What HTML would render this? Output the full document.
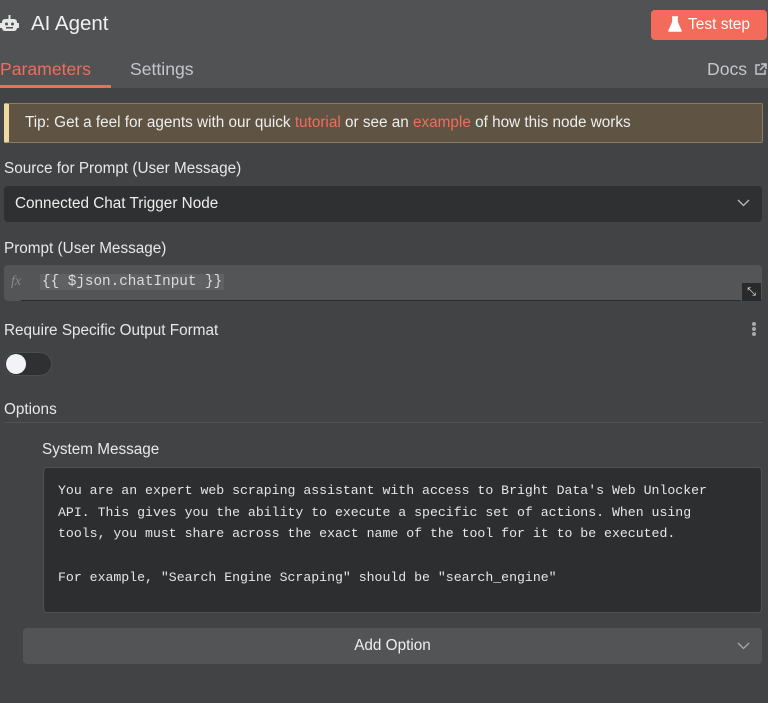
<!DOCTYPE html>
<html><head><meta charset="utf-8"><style>
*{box-sizing:border-box;margin:0;padding:0}
body{width:768px;height:703px;overflow:hidden;background:#424345;font-family:"Liberation Sans",sans-serif;color:#e8e8e8;position:relative}
.hdr{position:absolute;left:0;top:0;width:768px;height:88px;background:#515254}
.abs{position:absolute}
.t{font-size:15.3px}
</style></head><body>
<div class="hdr"></div>
<svg class="abs" style="left:0;top:13px" width="22" height="22" viewBox="0 0 22 22"><rect x="2" y="6" width="15" height="12" rx="3" fill="#e8e8e8"/><rect x="0" y="10" width="2" height="5" fill="#e8e8e8"/><rect x="17" y="10" width="2" height="5" fill="#e8e8e8"/><rect x="8.5" y="2" width="2" height="4" fill="#e8e8e8"/><circle cx="6.5" cy="11" r="1.5" fill="#515254"/><circle cx="12.5" cy="11" r="1.5" fill="#515254"/><rect x="6" y="14" width="7" height="1.5" fill="#515254"/></svg>
<div class="abs" style="left:31px;top:12px;font-size:20.5px;color:#f0f0f0">AI Agent</div>
<div class="abs" style="left:651px;top:10px;width:116px;height:30px;background:#f26b5b;border-radius:4px;color:#fff;font-size:15.5px;line-height:30px;padding-left:37px">Test step</div>
<svg class="abs" style="left:668px;top:16px" width="14" height="17" viewBox="0 0 14 17"><path d="M4 1h6M5 1v5L1 15h12L9 6V1" fill="#fff" stroke="#fff" stroke-width="1.6" stroke-linejoin="round"/></svg>
<div class="abs" style="left:0;top:59px;font-size:17.6px;color:#f26b5b">Parameters</div>
<div class="abs" style="left:0;top:85px;width:111px;height:3px;background:#f26b5b"></div>
<div class="abs" style="left:130px;top:59px;font-size:17.6px;color:#c4c6cc">Settings</div>
<div class="abs" style="left:707px;top:59px;font-size:17.6px;color:#c4c6cc">Docs</div>
<svg class="abs" style="left:754px;top:63px" width="13" height="13" viewBox="0 0 13 13"><path d="M6 2H2v9h9V7M7 1h5v5M12 1L6 7" fill="none" stroke="#c4c6cc" stroke-width="1.5"/></svg>
<div class="abs t" style="left:4px;top:103px;width:759px;height:40px;background:#5f5443;border:1px solid #8a7c64;border-left:5px solid #f0d9a3;border-radius:2px;line-height:38px;padding-left:16px;color:#eee">Tip: Get a feel for agents with our quick <span style="color:#f26b5b">tutorial</span> or see an <span style="color:#f26b5b">example</span> of how this node works</div>
<div class="abs t" style="left:4px;top:160px">Source for Prompt (User Message)</div>
<div class="abs t" style="left:4px;top:186px;width:758px;height:36px;background:#2f3031;border-radius:4px;line-height:36px;padding-left:11px;color:#eee">Connected Chat Trigger Node</div>
<svg class="abs" style="left:737px;top:199px" width="13" height="8" viewBox="0 0 13 8"><path d="M1 1l5.5 5.5L12 1" fill="none" stroke="#bbb" stroke-width="1.3"/></svg>
<div class="abs t" style="left:4px;top:240px">Prompt (User Message)</div>
<div class="abs" style="left:4px;top:265px;width:758px;height:36px;background:#545557;border-radius:4px"></div>
<div class="abs" style="left:21px;top:300px;width:720px;height:1px;background:#2a2a2b"></div>
<div class="abs" style="left:11px;top:274px;font-family:'Liberation Serif',serif;font-style:italic;font-size:14px;color:#8a8a8c">fx</div>
<div class="abs" style="left:40px;top:274px;font-family:'Liberation Mono',monospace;font-size:14.3px;color:#dcdcdc;background:#606163;padding:0 2px">{{ $json.chatInput }}</div>
<div class="abs" style="left:742px;top:283px;width:19px;height:18px;background:#2a2a2b;color:#eee;font-size:11px;text-align:center;line-height:18px">⤡</div>
<div class="abs t" style="left:4px;top:322px">Require Specific Output Format</div>
<div class="abs" style="left:752px;top:322px;width:4px;font-size:0"><div style="width:4px;height:4px;border-radius:2px;background:#aaa;margin-bottom:1px"></div><div style="width:4px;height:4px;border-radius:2px;background:#aaa;margin-bottom:1px"></div><div style="width:4px;height:4px;border-radius:2px;background:#aaa"></div></div>
<div class="abs" style="left:4px;top:352px;width:48px;height:24px;border-radius:12px;background:#2f3031;border:1px solid #4c4d4f"></div>
<div class="abs" style="left:6px;top:354px;width:20px;height:20px;border-radius:10px;background:#f2f2f7"></div>
<div class="abs t" style="left:4px;top:401px">Options</div>
<div class="abs" style="left:4px;top:422px;width:759px;height:1px;background:#525356"></div>
<div class="abs t" style="left:42px;top:441px">System Message</div>
<div class="abs" style="left:43px;top:467px;width:719px;height:146px;background:#2d2e2f;border:1px solid #505153;border-radius:4px;padding:12px 14px;font-family:'Liberation Mono',monospace;font-size:13.2px;line-height:21.7px;color:#e6e6e6;white-space:pre">You are an expert web scraping assistant with access to Bright Data's Web Unlocker
API. This gives you the ability to execute a specific set of actions. When using
tools, you must share across the exact name of the tool for it to be executed.

For example, "Search Engine Scraping" should be "search_engine"</div>
<div class="abs t" style="left:23px;top:628px;width:739px;height:36px;background:#535456;border-radius:4px;line-height:36px;text-align:center;color:#eee">Add Option</div>
<svg class="abs" style="left:737px;top:642px" width="13" height="8" viewBox="0 0 13 8"><path d="M1 1l5.5 5.5L12 1" fill="none" stroke="#aaa" stroke-width="1.3"/></svg>
</body></html>
